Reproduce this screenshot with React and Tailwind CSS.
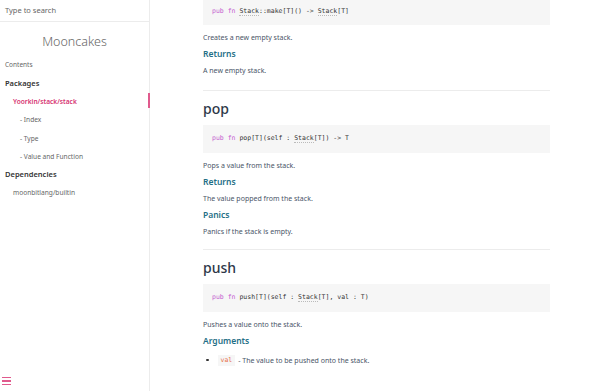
import React from 'react'

const sans = { fontFamily: '"Noto Sans", "Open Sans", sans-serif' }

function Code({ children }) {
  return (
    <div className="bg-[#f6f6f6] px-[9px] py-[10.5px] font-['DejaVu_Sans_Mono',monospace] text-[6.5px] leading-[7px] text-[#333] whitespace-pre">
      {children}
    </div>
  )
}

const Kw = ({ children }) => <span className="text-[#c55fd0]">{children}</span>
const Ty = ({ children }) => <span className="border-b border-dotted border-[#bbb]">{children}</span>

function H3({ children }) {
  return <div className="text-[8.5px] font-semibold text-[#1f6f86] leading-[10px] mt-[7px]">{children}</div>
}

function P({ children, first }) {
  return <div className={first ? "text-[7px] text-[#4a5568] leading-[9px] mt-[8px]" : "text-[7px] text-[#4a5568] leading-[9px] mt-[7px]"}>{children}</div>
}

function H2({ children }) {
  return <div className="text-[14px] font-medium text-[#2d3748] leading-[18px] mt-[9px] mb-[7px]">{children}</div>
}

export default function App() {
  return (
    <div className="flex h-[391px] w-[600px] overflow-hidden bg-white" style={sans}>
      <aside className="w-[150px] shrink-0 border-r border-[#ececec] flex flex-col relative">
        <div className="h-[22px] border-b border-[#ececec] flex items-center px-[5px] text-[7.5px] text-[#666]">
          Type to search
        </div>
        <div className="text-center text-[12.5px] font-light text-[#666] mt-[12px] leading-[16px]">Mooncakes</div>
        <nav className="flex flex-col text-[6.6px] leading-[9px] mt-[10px]">
          <div className="px-[5px] text-[#666] text-[6.5px]">Contents</div>
          <div className="px-[5px] mt-[10px] font-semibold text-[#333] text-[7.5px]">Packages</div>
          <div className="relative pl-[13px] mt-[9px] font-semibold text-[#d63372]">
            Yoorkin/stack/stack
            <span className="absolute right-[-1px] top-[-4px] h-[15px] w-[2px] bg-[#e05a8d]" />
          </div>
          <div className="pl-[20px] mt-[9px] text-[#666]">- Index</div>
          <div className="pl-[20px] mt-[10px] text-[#666]">- Type</div>
          <div className="pl-[20px] mt-[9px] text-[#666]">- Value and Function</div>
          <div className="px-[5px] mt-[9px] font-semibold text-[#333] text-[7.5px]">Dependencies</div>
          <div className="pl-[13px] mt-[9px] text-[#666]">moonbitlang/builtin</div>
        </nav>
        <div className="mt-auto mb-[6px] ml-[2px] flex flex-col gap-[2px] w-[9px]">
          <span className="h-[1.5px] bg-[#e05a8d]" />
          <span className="h-[1.5px] bg-[#e05a8d]" />
          <span className="h-[1.5px] bg-[#e05a8d]" />
        </div>
      </aside>

      <main className="flex-1 pl-[53px] pr-[50px] mt-[-3px]">
        <Code>
          <Kw>pub fn</Kw> <Ty>Stack</Ty>::make[T]() -&gt; <Ty>Stack</Ty>[T]
        </Code>
        <P first>Creates a new empty stack.</P>
        <H3>Returns</H3>
        <P>A new empty stack.</P>
        <hr className="border-[#ececec] mt-[14.5px]" />
        <H2>pop</H2>
        <Code>
          <Kw>pub fn</Kw> pop[T](self : <Ty>Stack</Ty>[T]) -&gt; T
        </Code>
        <P first>Pops a value from the stack.</P>
        <H3>Returns</H3>
        <P>The value popped from the stack.</P>
        <H3>Panics</H3>
        <P>Panics if the stack is empty.</P>
        <hr className="border-[#ececec] mt-[13px]" />
        <H2>push</H2>
        <Code>
          <Kw>pub fn</Kw> push[T](self : <Ty>Stack</Ty>[T], val : T)
        </Code>
        <P first>Pushes a value onto the stack.</P>
        <H3>Arguments</H3>
        <ul className="mt-[9px] text-[7px] text-[#4a5568] leading-[9px]">
          <li className="flex items-center">
            <span className="w-[2.5px] h-[2.5px] rounded-full bg-[#333] ml-[3px] mr-[9px]" />
            <span className="bg-[#f6f6f6] text-[#e8704a] font-['DejaVu_Sans_Mono',monospace] text-[6.5px] px-[3px] py-[1px]">val</span>
            <span className="ml-[3px]">- The value to be pushed onto the stack.</span>
          </li>
        </ul>
      </main>
    </div>
  )
}
